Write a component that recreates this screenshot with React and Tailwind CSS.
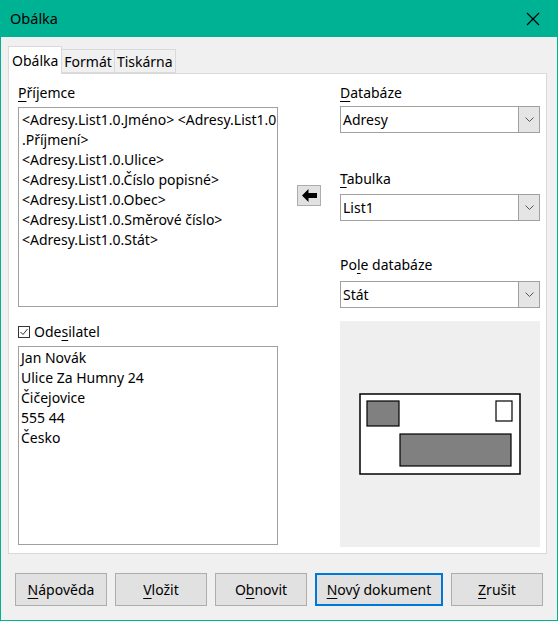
import React from "react";

const U = ({ children }) => <span className="underline underline-offset-[3px]">{children}</span>;

function Select({ value }) {
  return (
    <div className="flex h-[27px] w-[200px] border border-[#a0a0a0] bg-white">
      <div className="flex-1 pl-[2px] leading-[25px]">{value}</div>
      <div className="flex w-[21px] items-center justify-center border-l border-[#a0a0a0] bg-[#e5e5e5]">
        <svg width="9" height="5" viewBox="0 0 9 5">
          <path d="M0.5 0.5 L4.5 4.5 L8.5 0.5" fill="none" stroke="#555" strokeWidth="1" />
        </svg>
      </div>
    </div>
  );
}

function Button({ children, w = "w-[92px]", focus }) {
  return (
    <div
      className={`${w} flex h-[33px] items-center justify-center bg-[#e1e1e1] ${
        focus ? "border-2 border-[#0078d7]" : "border border-[#adadad]"
      }`}
    >
      {children}
    </div>
  );
}

export default function App() {
  const recipient = [
    "<Adresy.List1.0.Jméno> <Adresy.List1.0",
    ".Příjmení>",
    "<Adresy.List1.0.Ulice>",
    "<Adresy.List1.0.Číslo popisné>",
    "<Adresy.List1.0.Obec>",
    "<Adresy.List1.0.Směrové číslo>",
    "<Adresy.List1.0.Stát>",
  ];
  const sender = ["Jan Novák", "Ulice Za Humny 24", "Čičejovice", "555 44", "Česko"];

  return (
    <div
      className="flex h-[621px] w-[558px] flex-col border border-[#00b294] bg-[#f0f0f0] text-[14px] text-black"
      style={{ fontFamily: "'Noto Sans', 'Open Sans', sans-serif" }}
    >
      {/* title bar */}
      <div className="flex h-[36px] items-center justify-between bg-[#00b294] pl-[9px] pr-[17px]">
        <span className="text-[14.5px]">Obálka</span>
        <svg width="14" height="14" viewBox="0 0 14 14">
          <path d="M1 1 L13 13 M13 1 L1 13" stroke="#000" strokeWidth="1.2" />
        </svg>
      </div>

      <div className="px-[7px] pt-[9px]">
        {/* tabs */}
        <div className="flex items-end">
          <div className="relative z-10 -mb-px flex h-[28px] items-center border border-b-0 border-[#d9d9d9] bg-white px-[3px]">
            Obálka
          </div>
          <div className="flex h-[24px] items-center border border-l-0 border-[#d9d9d9] bg-[#f0f0f0] px-[2px]">
            Formát
          </div>
          <div className="flex h-[24px] items-center border border-l-0 border-[#d9d9d9] bg-[#f0f0f0] px-[2px]">
            Tiskárna
          </div>
        </div>

        {/* tab page */}
        <div className="flex h-[481px] w-[539px] border border-[#d9d9d9] bg-white pl-[9px] pt-[9px]">
          {/* left column */}
          <div className="flex w-[260px] flex-col">
            <div className="h-[20px] leading-[20px]">
              <U>P</U>říjemce
            </div>
            <div className="mt-[4px] h-[200px] border border-[#a0a0a0] px-[3px] pt-[2px] leading-[20px]">
              {recipient.map((l) => (
                <div key={l} className="whitespace-nowrap">{l}</div>
              ))}
            </div>
            <div className="mt-[15px] flex h-[20px] items-center gap-[4px]">
              <svg width="12" height="12" viewBox="0 0 12 12">
                <rect x="0.5" y="0.5" width="11" height="11" fill="#fff" stroke="#333" />
                <path d="M2.5 6 L5 8.5 L9.5 3" fill="none" stroke="#333" strokeWidth="1" />
              </svg>
              <span className="leading-[20px]">
                Ode<U>s</U>ilatel
              </span>
            </div>
            <div className="mt-[4px] h-[199px] border border-[#a0a0a0] px-[2px] pt-[1px] leading-[20px]">
              {sender.map((l) => (
                <div key={l}>{l}</div>
              ))}
            </div>
          </div>

          {/* insert field button */}
          <div className="ml-[19px] w-[24px] pt-[102px]">
            <div className="flex h-[21px] w-[24px] items-center justify-center border border-[#adadad] bg-[#e1e1e1]">
              <svg width="15" height="13" viewBox="0 0 15 13">
                <path d="M0 6.5 L6.5 0 L6.5 4 L15 4 L15 9 L6.5 9 L6.5 13 Z" fill="#000" />
              </svg>
            </div>
          </div>

          {/* right column */}
          <div className="ml-[19px] flex w-[200px] flex-col">
            <div className="h-[20px] leading-[20px]">
              <U>D</U>atabáze
            </div>
            <div className="mt-[3px]">
              <Select value="Adresy" />
            </div>
            <div className="mt-[36px] h-[20px] leading-[20px]">
              <U>T</U>abulka
            </div>
            <div className="mt-[5px]">
              <Select value="List1" />
            </div>
            <div className="mt-[34px] h-[20px] leading-[20px]">
              Po<U>l</U>e databáze
            </div>
            <div className="mt-[6px]">
              <Select value="Stát" />
            </div>
            <div className="mt-[13px] flex h-[226px] w-[200px] items-center justify-center bg-[#efefef]">
              <svg width="162" height="82" viewBox="0 0 162 82">
                <rect x="1" y="1" width="160" height="80" fill="#fff" stroke="#000" strokeWidth="1.5" />
                <rect x="8" y="8" width="32" height="25" fill="#808080" stroke="#000" strokeWidth="1.2" />
                <rect x="137" y="8" width="16" height="20" fill="#fff" stroke="#000" strokeWidth="1.2" />
                <rect x="41" y="41" width="111" height="32" fill="#808080" stroke="#000" strokeWidth="1.2" />
              </svg>
            </div>
          </div>
        </div>

        {/* dialog buttons */}
        <div className="mt-[19px] flex gap-[8px] pl-[7px]">
          <Button>
            <span><U>N</U>ápověda</span>
          </Button>
          <Button>
            <span><U>V</U>ložit</span>
          </Button>
          <Button>
            <span>O<U>b</U>novit</span>
          </Button>
          <Button w="w-[128px]" focus>
            <span><U>N</U>ový dokument</span>
          </Button>
          <Button>
            <span><U>Z</U>rušit</span>
          </Button>
        </div>
      </div>
    </div>
  );
}
